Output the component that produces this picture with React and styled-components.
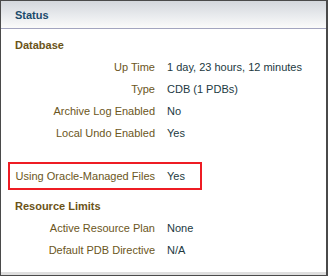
import React from 'react'
import styled, { createGlobalStyle } from 'styled-components'

const GlobalStyle = createGlobalStyle`
  body {
    margin: 0;
    background: #ffffff;
    font-family: "Liberation Sans", Arial, sans-serif;
  }
`;

const database = [
  { label: 'Up Time', value: '1 day, 23 hours, 12 minutes' },
  { label: 'Type', value: 'CDB (1 PDBs)' },
  { label: 'Archive Log Enabled', value: 'No' },
  { label: 'Local Undo Enabled', value: 'Yes' },
]

const limits = [
  { label: 'Active Resource Plan', value: 'None' },
  { label: 'Default PDB Directive', value: 'N/A' },
]

const App = () => {
  return (
    <>
      <GlobalStyle />
      <Panel>
        <Header>
          <HeaderTitle>Status</HeaderTitle>
        </Header>
        <Body>
          <SectionTitle>Database</SectionTitle>
          <Rows>
            {database.map((row) => (
              <Row key={row.label}>
                <Label>{row.label}</Label>
                <Value>{row.value}</Value>
              </Row>
            ))}
          </Rows>
          <Highlight>
            <Row $labelWidth={145}>
              <Label>Using Oracle-Managed Files</Label>
              <Value>Yes</Value>
            </Row>
          </Highlight>
          <SectionTitle $top={9}>Resource Limits</SectionTitle>
          <Rows>
            {limits.map((row) => (
              <Row key={row.label}>
                <Label>{row.label}</Label>
                <Value>{row.value}</Value>
              </Row>
            ))}
          </Rows>
        </Body>
      </Panel>
    </>
  )
}

export default App

const Panel = styled.div`
  width: 328px;
  box-sizing: border-box;
  border: 1px solid #4a4a4a;
  border-right-width: 2px;
  background: #ffffff;
  box-shadow: inset 0 -3px 0 #dedede;
`;

const Header = styled.div`
  height: 27px;
  display: flex;
  align-items: center;
  padding-left: 14px;
  background: linear-gradient(to bottom, #d3d7dc 0%, #e9ebee 55%, #fbfbfa 100%);
  border-bottom: 1px solid #a3a5bf;
`;

const HeaderTitle = styled.h2`
  margin: 0;
  font-size: 11px;
  font-weight: bold;
  color: #1b4a6b;
`;

const Body = styled.div`
  padding: 9px 0 14px 0;
`;

const SectionTitle = styled.h3`
  margin: ${(p) => p.$top || 0}px 0 4px 14px;
  height: 14px;
  line-height: 14px;
  font-size: 11px;
  font-weight: bold;
  color: #6b5317;
`;

const Rows = styled.div`
  display: flex;
  flex-direction: column;
`;

const Row = styled.div`
  display: grid;
  grid-template-columns: ${(p) => p.$labelWidth || 154}px 1fr;
  column-gap: 12px;
  height: 22px;
  align-items: center;
  font-size: 11px;
`;

const Label = styled.span`
  text-align: right;
  color: #6b5622;
  white-space: nowrap;
`;

const Value = styled.span`
  color: #22393f;
  white-space: nowrap;
`;

const Highlight = styled.div`
  width: 194px;
  box-sizing: border-box;
  margin: 18px 0 0 7px;
  padding: 1px 0;
  border: 2px solid #ee1c24;
`;
